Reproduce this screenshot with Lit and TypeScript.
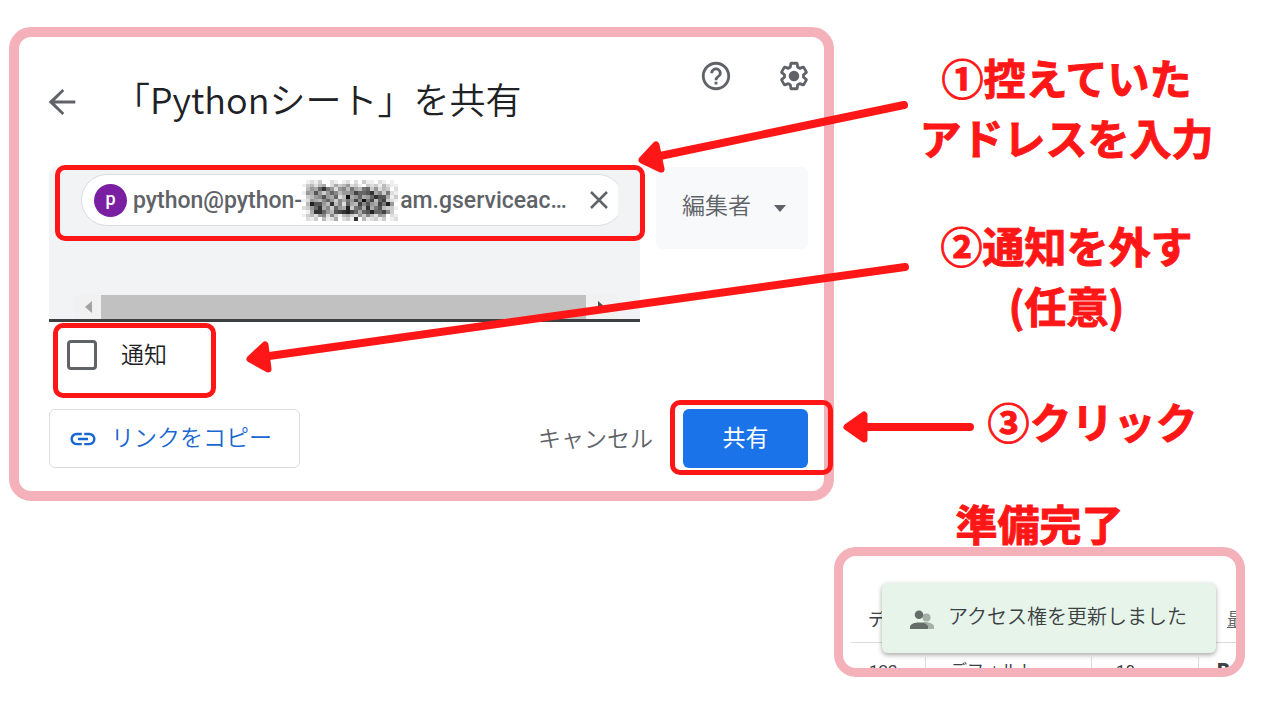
import { LitElement, html, css, svg } from "lit";
import { customElement } from "lit/decorators.js";

/* Pixelated patch over the middle of the address: one hex digit per cell, 0 dark to f light. */
const MOSAIC = [
  "fedecffdefedfdfceefdefef",
  "ecbdbafdacb9dcefcdcebdee",
  "fb9a6379d98b7ab76c9dbcfd",
  "e9a59c968b99846653a8c7de",
  "fcb9859a6db1a96a96355aec",
  "ed9ab869c8a7948174b64cde",
  "fb2559b3b8d6ab4859a4729f",
  "dc963a8c69a2c76a3a75bcce",
  "fea3369b543246a6526648cf",
  "ecbd98d8cebacd9c8bd9afde",
  "fdecfbedafdce3fbedcecfed",
];

@customElement("mosaic-patch")
class MosaicPatch extends LitElement {
  static styles = css`
    :host { display: block; flex: none; width: 96px; height: 41px; }
    svg { display: block; width: 100%; height: 100%; }
  `;
  render() {
    return html`<svg viewBox="0 0 24 11" preserveAspectRatio="none" shape-rendering="crispEdges" aria-hidden="true">
      ${MOSAIC.map((row, y) =>
        [...row].map((c, x) => svg`<rect x=${x} y=${y} width="1" height="1" fill=${`#${c}${c}${c}`}></rect>`)
      )}
    </svg>`;
  }
}

@customElement("share-dialog")
class ShareDialog extends LitElement {
  static styles = css`
    :host { display: block; font-family: Roboto, "Noto Sans CJK JP", sans-serif; font-size: 23px; font-weight: 350; color: #202124; }
    * { box-sizing: border-box; }
    svg { display: block; flex: none; }
    button, select { font: inherit; margin: 0; padding: 0; border: 0; background: none; color: inherit; }
    .frame { border: 10px solid #f4b1ba; border-radius: 22px; background: #fff; padding: 0 16px 23px 30px; }
    .head { display: flex; height: 130px; align-items: flex-start; }
    .back { margin: 45px 0 0 -7px; color: #5f6368; }
    .title { flex: 1; margin: 35px 0 0 32px; font-family: "Noto Sans CJK JP", sans-serif; font-size: 36px; line-height: 52px; font-weight: 350; white-space: nowrap; }
    .tools { display: flex; gap: 44px; margin: 22px -3px 0 0; color: #5f6368; }
    .row { display: flex; gap: 16px; align-items: flex-start; }
    .people { position: relative; flex: 1; min-width: 0; height: 155px; background: #f1f3f4; border-bottom: 3px solid #3c4043; border-radius: 8px 8px 0 0; padding: 7px 22px 0 25px; display: flex; flex-direction: column; justify-content: space-between; }
    .clip { overflow: hidden; margin-left: 7px; }
    .chip { display: flex; align-items: center; height: 52px; width: calc(100% + 6px); border: 1px solid #dadce0; border-radius: 26px; background: #fff; padding: 0 12px 0 12px; font-weight: 500; color: #5f6368; white-space: nowrap; }
    .avatar { flex: none; width: 33px; height: 33px; margin-right: 6px; border-radius: 50%; background: #7b1fa2; color: #fff; font-size: 18px; line-height: 30px; text-align: center; }
    .tail { flex: 1; padding-left: 2px; }
    .bar { display: flex; height: 24px; background: #f1f1f1; align-items: center; }
    .bar-end { flex: 0 0 27px; display: flex; justify-content: center; }
    .thumb { flex: 1; height: 100%; background: #c1c1c1; }
    .bar-end:last-child { flex-basis: 32px; }
    .mark { position: absolute; border: 5px solid #ff1616; border-radius: 10px; pointer-events: none; }
    .mark-people { inset: -2px -5px auto 6px; height: 76px; }
    .role { position: relative; width: 152px; height: 82px; }
    .role select { appearance: none; width: 100%; height: 100%; padding: 0 0 4px 26px; border-radius: 6px; background: #f8f9fa; color: #5f6368; }
    .caret { position: absolute; right: 21px; top: 38px; pointer-events: none; }
    .notify { position: relative; display: flex; width: 163px; height: 75px; margin: 1px 0 0 4px; padding: 0 0 11px 14px; align-items: center; }
    .notify label { display: flex; align-items: center; gap: 24px; }
    .notify label span { padding-bottom: 4px; }
    .notify input { appearance: none; width: 30px; height: 30px; margin: 0; border: 3px solid #5f6368; border-radius: 4px; background: #fff; }
    .mark-all { inset: 0; }
    .foot { display: flex; align-items: center; margin-top: 11px; }
    .copy { display: flex; align-items: center; gap: 13px; width: 251px; height: 59px; padding: 0 0 0 18px; border: 1px solid #dadce0; border-radius: 6px; color: #1967d2; }
    .copy span { padding-bottom: 6px; }
    .cancel { margin-left: auto; padding-bottom: 4px; color: #5f6368; }
    .share { position: relative; width: 125px; height: 59px; padding-bottom: 5px; margin-left: 30px; border-radius: 6px; background: #1a73e8; color: #fff; font-weight: 400; }
    .mark-share { inset: -9px -25px -7px -13px; }
  `;
  render() {
    return html`<section class="frame" aria-label="共有">
      <header class="head">
        <button class="back" aria-label="戻る">
          <svg width="40" height="40" viewBox="0 0 24 24" fill="currentColor"><path d="M20 11.100H7.650l5.700-5.700L12.200 4.200 4 12l8.200 7.800 1.150-1.200-5.700-5.700H20z"/></svg>
        </button>
        <h1 class="title">「Pythonシート」を共有</h1>
        <div class="tools">
          <button aria-label="ヘルプ">
            <svg width="34" height="34" viewBox="0 0 24 24" fill="currentColor"><path d="M11 18h2v-2h-2v2zm1-16C6.480 2 2 6.480 2 12s4.480 10 10 10 10-4.480 10-10S17.520 2 12 2zm0 18c-4.410 0-8-3.590-8-8s3.590-8 8-8 8 3.590 8 8-3.590 8-8 8zm0-14c-2.210 0-4 1.790-4 4h2c0-1.100.9-2 2-2s2 .9 2 2c0 2-3 1.750-3 5h2c0-2.250 3-2.500 3-5 0-2.210-1.790-4-4-4z"/></svg>
          </button>
          <button aria-label="設定">
            <svg width="34" height="34" viewBox="0 0 24 24"><g transform="translate(1.200 1.200) scale(.9)"><path fill="none" stroke="currentColor" stroke-width="2.200" stroke-linejoin="round" d="M19.430 12.980c.04-.32.07-.64.07-.98s-.03-.66-.07-.98l2.110-1.650c.19-.15.24-.42.12-.64l-2-3.460c-.12-.22-.39-.3-.61-.22l-2.490 1c-.52-.4-1.080-.73-1.690-.98l-.38-2.650C14.460 2.180 14.250 2 14 2h-4c-.25 0-.46.18-.49.42l-.38 2.650c-.61.25-1.170.59-1.690.98l-2.490-1c-.23-.09-.49 0-.61.22l-2 3.460c-.13.22-.07.49.12.64l2.110 1.650c-.04.32-.07.65-.07.98s.03.66.07.98l-2.110 1.650c-.19.15-.24.42-.12.64l2 3.460c.12.22.39.3.61.22l2.490-1c.52.4 1.080.73 1.690.98l.38 2.650c.03.24.24.42.49.42h4c.25 0 .46-.18.49-.42l.38-2.650c.61-.25 1.170-.59 1.690-.98l2.490 1c.23.09.49 0 .61-.22l2-3.460c.12-.22.07-.49-.12-.64z"/></g><circle cx="12" cy="12" r="3.700" fill="currentColor"/></svg>
          </button>
        </div>
      </header>
      <div class="row">
        <div class="people">
          <div class="clip">
            <div class="chip">
              <span class="avatar">p</span><span>python@python-</span><mosaic-patch></mosaic-patch><span class="tail">am.gserviceac…</span>
              <button aria-label="削除"><svg width="24" height="24" viewBox="0 0 24 24" stroke="#5f6368" stroke-width="2.500"><path d="M4 4l16 16M20 4L4 20"/></svg></button>
            </div>
          </div>
          <div class="bar">
            <span class="bar-end"><svg width="8" height="14" viewBox="0 0 8 14"><path d="M8 1v12L1 7z" fill="#a3a3a3"/></svg></span>
            <span class="thumb"></span>
            <span class="bar-end"><svg width="8" height="14" viewBox="0 0 8 14"><path d="M0 1v12l7-6z" fill="#505050"/></svg></span>
          </div>
          <div class="mark mark-people"></div>
        </div>
        <div class="role">
          <select aria-label="権限"><option>編集者</option></select>
          <svg class="caret" width="14" height="8" viewBox="0 0 14 8"><path d="M1 0h12L7 7z" fill="#5f6368"/></svg>
        </div>
      </div>
      <div class="notify">
        <label><input type="checkbox" /><span>通知</span></label>
        <div class="mark mark-all"></div>
      </div>
      <footer class="foot">
        <button class="copy"><svg width="30" height="30" viewBox="0 0 24 24" fill="currentColor"><path d="M3.900 12c0-1.710 1.390-3.100 3.100-3.100h4V7H7c-2.760 0-5 2.240-5 5s2.240 5 5 5h4v-1.900H7c-1.710 0-3.100-1.390-3.100-3.100zM8 13h8v-2H8v2zm9-6h-4v1.900h4c1.710 0 3.100 1.390 3.100 3.100s-1.390 3.100-3.100 3.100h-4V17h4c2.760 0 5-2.240 5-5s-2.240-5-5-5z"/></svg><span>リンクをコピー</span></button>
        <button class="cancel">キャンセル</button>
        <button class="share">共有<span class="mark mark-share"></span></button>
      </footer>
    </section>`;
  }
}

@customElement("result-view")
class ResultView extends LitElement {
  static styles = css`
    :host { display: block; font-family: Roboto, "Noto Sans CJK JP", sans-serif; color: #3c4043; }
    * { box-sizing: border-box; }
    .pane { position: relative; height: 130px; border: 9px solid #f4b1ba; border-radius: 22px; overflow: hidden; background: #fff; }
    .menu { display: flex; justify-content: space-between; height: 87px; margin-left: 8px; padding: 50px 0 0 17px; border-bottom: 1px solid #dadce0; font-size: 18px; line-height: 28px; overflow: hidden; white-space: nowrap; }
    .last { width: 9px; overflow: hidden; text-decoration: underline; color: #5f6368; font-weight: 350; }
    .bar { display: grid; grid-template-columns: 75px 166px 107px 1fr; margin: 14px 0 0 8px; font-size: 17px; line-height: 28px; white-space: nowrap; }
    .cell { height: 28px; padding-left: 24px; border-right: 1px solid #dadce0; }
    .cell:first-child { padding-left: 18px; }
    .cell:last-child { padding-left: 18px; border: 0; font-weight: 900; font-size: 20px; }
    .toast { position: absolute; inset: 27px 20px auto 39px; display: flex; align-items: center; gap: 14px; height: 70px; padding: 0 0 2px 28px; border-radius: 6px; background: #e6f4ea; box-shadow: 0 2px 5px rgb(0 0 0 / 35%); font-size: 20px; font-weight: 350; white-space: nowrap; }
    .toast svg { flex: none; margin-top: 6px; }
  `;
  render() {
    return html`<div class="pane">
      <div class="menu"><span>デ</span><span class="last">最</span></div>
      <div class="bar"><span class="cell">123</span><span class="cell">デフォルト</span><span class="cell">10</span><span class="cell">B</span></div>
      <div class="toast" role="status">
        <svg width="24" height="20" viewBox="0 0 24 20"><circle cx="16.500" cy="7.500" r="4" fill="#a4afa8"/><path d="M14 19v-2c0-2-1-4-2-5 6-.5 12 1.500 12 4.500V19z" fill="#a4afa8"/><circle cx="9" cy="4.800" r="4.300" fill="#656d68"/><path d="M0 19v-2.200C0 14 5 12.500 9 12.500s9 1.500 9 4.300V19z" fill="#656d68"/></svg>
        <span>アクセス権を更新しました</span>
      </div>
    </div>`;
  }
}

@customElement("app-root")
class AppRoot extends LitElement {
  static styles = css`
    :host { display: block; background: #fff; }
    .page { position: relative; display: grid; grid-template-columns: minmax(0, 825fr) minmax(0, 411fr); align-items: start; min-height: 100vh; padding: 0 35px 0 9px; box-sizing: border-box; }
    share-dialog { margin-top: 27px; }
    .side { display: flex; flex-direction: column; padding-top: 47px; font-family: "Noto Sans CJK JP", sans-serif; font-weight: 700; font-size: 42px; line-height: 60px; color: #ff1616; text-align: center; white-space: nowrap; -webkit-text-stroke: 1px #ff1616; stroke-linejoin: round; }
    .side p, .side h2 { margin: 0; font: inherit; }
    .side .note { padding-left: 54px; margin-bottom: 48px; }
    .side .third { padding-left: 106px; margin: 8px 0 51px; }
    .side h2 { line-height: 42px; padding-bottom: 3px; }
    result-view { -webkit-text-stroke: 0; text-align: left; font-weight: 400; }
    .arrows { position: absolute; inset: 0; width: 100%; height: 720px; pointer-events: none; }
  `;
  render() {
    return html`<main class="page">
      <share-dialog></share-dialog>
      <div class="side">
        <p class="note">①控えていた<br />アドレスを入力</p>
        <p class="note">②通知を外す<br />(任意)</p>
        <p class="third">③クリック</p>
        <h2>準備完了</h2>
        <result-view></result-view>
      </div>
      <svg class="arrows" viewBox="0 0 1280 720" preserveAspectRatio="none" fill="#ff1616" stroke="#ff1616" stroke-linejoin="round" stroke-linecap="round" aria-hidden="true">
        <path d="M660 156L904 105M262 357L905 267M865 427H970" stroke-width="8"/>
        <path d="M642 160L656 145L661 169ZM250 359L265 345L268 369ZM847 427L864 415V439Z" stroke-width="7"/>
      </svg>
    </main>`;
  }
}
